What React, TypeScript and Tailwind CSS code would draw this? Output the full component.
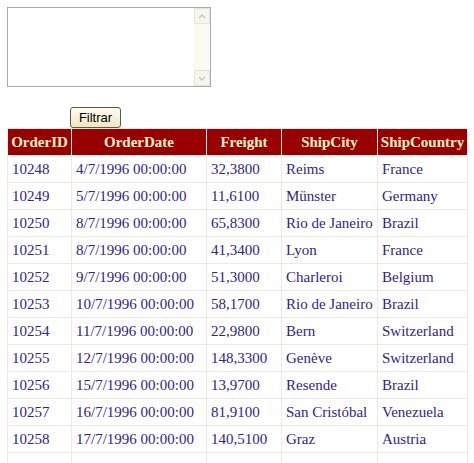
import React from "react";

type Order = {
  id: string;
  date: string;
  freight: string;
  city: string;
  country: string;
};

const orders: Order[] = [
  { id: "10248", date: "4/7/1996 00:00:00", freight: "32,3800", city: "Reims", country: "France" },
  { id: "10249", date: "5/7/1996 00:00:00", freight: "11,6100", city: "Münster", country: "Germany" },
  { id: "10250", date: "8/7/1996 00:00:00", freight: "65,8300", city: "Rio de Janeiro", country: "Brazil" },
  { id: "10251", date: "8/7/1996 00:00:00", freight: "41,3400", city: "Lyon", country: "France" },
  { id: "10252", date: "9/7/1996 00:00:00", freight: "51,3000", city: "Charleroi", country: "Belgium" },
  { id: "10253", date: "10/7/1996 00:00:00", freight: "58,1700", city: "Rio de Janeiro", country: "Brazil" },
  { id: "10254", date: "11/7/1996 00:00:00", freight: "22,9800", city: "Bern", country: "Switzerland" },
  { id: "10255", date: "12/7/1996 00:00:00", freight: "148,3300", city: "Genève", country: "Switzerland" },
  { id: "10256", date: "15/7/1996 00:00:00", freight: "13,9700", city: "Resende", country: "Brazil" },
  { id: "10257", date: "16/7/1996 00:00:00", freight: "81,9100", city: "San Cristóbal", country: "Venezuela" },
  { id: "10258", date: "17/7/1996 00:00:00", freight: "140,5100", city: "Graz", country: "Austria" },
];

const headers = ["OrderID", "OrderDate", "Freight", "ShipCity", "ShipCountry"];

function FakeScrollbar() {
  return (
    <div className="flex w-[16px] flex-col bg-[#fbfbf4]">
      <div className="flex h-[16px] items-center justify-center border border-[#e4e4dc] bg-[#f6f6ef]">
        <svg width="8" height="5" viewBox="0 0 8 5">
          <path d="M1 4 L4 1 L7 4" fill="none" stroke="#c8c8c0" strokeWidth="1.5" />
        </svg>
      </div>
      <div className="flex-1" />
      <div className="flex h-[16px] items-center justify-center border border-[#e4e4dc] bg-[#f6f6ef]">
        <svg width="8" height="5" viewBox="0 0 8 5">
          <path d="M1 1 L4 4 L7 1" fill="none" stroke="#c8c8c0" strokeWidth="1.5" />
        </svg>
      </div>
    </div>
  );
}

export default function App() {
  return (
    <div className="h-[463px] w-[474px] overflow-hidden bg-white">
      <div className="ml-[7px] mt-[7px] flex h-[80px] w-[204px] border border-[#a5acb2] bg-white">
        <div className="flex-1" />
        <FakeScrollbar />
      </div>

      <button
        type="button"
        className="ml-[70px] mt-[20px] block h-[21px] w-[51px] rounded-[3px] border border-[#5c5a40] bg-gradient-to-b from-[#fffdf2] to-[#efe6c2] font-['Liberation_Sans',Arial,sans-serif] text-[13px] leading-none text-black"
      >
        Filtrar
      </button>

      <table className="ml-[7px] w-[460px] table-fixed border-collapse font-['Liberation_Serif','Times_New_Roman',serif] text-[15px]">
        <colgroup>
          <col className="w-[64px]" />
          <col className="w-[135px]" />
          <col className="w-[75px]" />
          <col className="w-[96px]" />
          <col className="w-[90px]" />
        </colgroup>
        <thead>
          <tr className="h-[27px] bg-[#990000]">
            {headers.map((h) => (
              <th
                key={h}
                className="whitespace-nowrap border border-[#ece8e2] px-[2px] text-center font-bold text-[#fdf3c8]"
              >
                {h}
              </th>
            ))}
          </tr>
        </thead>
        <tbody className="text-[#32238a]">
          {orders.map((o) => (
            <tr key={o.id} className="h-[27px]">
              <td className="whitespace-nowrap border border-[#ece8e2] pl-[4px]">{o.id}</td>
              <td className="whitespace-nowrap border border-[#ece8e2] pl-[4px]">{o.date}</td>
              <td className="whitespace-nowrap border border-[#ece8e2] pl-[4px]">{o.freight}</td>
              <td className="whitespace-nowrap border border-[#ece8e2] pl-[4px]">{o.city}</td>
              <td className="whitespace-nowrap border border-[#ece8e2] pl-[4px]">{o.country}</td>
            </tr>
          ))}
          {/* next row runs past the bottom edge */}
          <tr className="h-[27px]">
            <td className="border border-[#ece8e2]" />
            <td className="border border-[#ece8e2]" />
            <td className="border border-[#ece8e2]" />
            <td className="border border-[#ece8e2]" />
            <td className="border border-[#ece8e2]" />
          </tr>
        </tbody>
      </table>
    </div>
  );
}
